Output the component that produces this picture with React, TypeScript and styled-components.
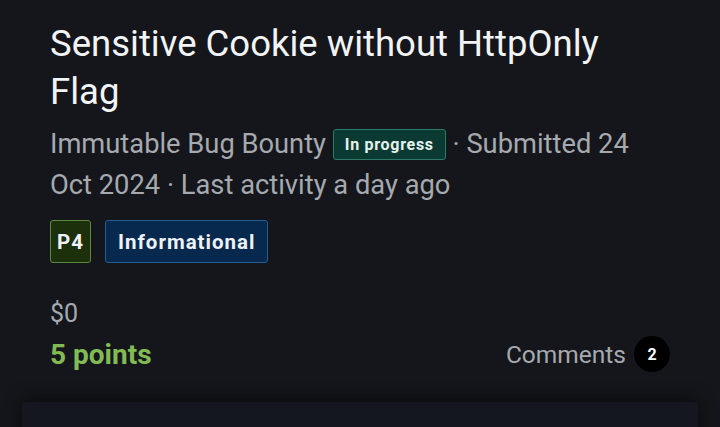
import styled, { createGlobalStyle } from 'styled-components';

const GlobalStyle = createGlobalStyle`
  body {
    margin: 0;
    background: #14161b;
    font-family: Roboto, "Noto Sans", sans-serif;
    overflow: hidden;
  }
`;

const Page = styled.div`
  padding: 20px 22px 0;
  height: 427px;
  box-sizing: border-box;
`;

const Summary = styled.section`
  padding: 0 28px;
`;

const Title = styled.h1`
  margin: 0;
  font-size: 36.5px;
  font-weight: 400;
  line-height: 48px;
  color: #f2f3f5;
`;

const Meta = styled.p`
  margin: 8px 0 0;
  font-size: 27.3px;
  line-height: 41px;
  color: #a6a9ae;
`;

const Status = styled.span`
  display: inline-block;
  vertical-align: 3px;
  padding: 0 11px;
  height: 29px;
  line-height: 29px;
  font-size: 16px;
  font-weight: 700;
  letter-spacing: 0.7px;
  color: #e6f2ee;
  background: #0b3a32;
  border: 1px solid #2b7b66;
  border-radius: 3px;
`;

const Tags = styled.div`
  display: flex;
  gap: 14px;
  margin-top: 14px;
`;

const Tag = styled.span<{ $bg: string; $border: string; $pad: number }>`
  display: inline-flex;
  align-items: center;
  height: 43px;
  padding: 0 ${(p) => p.$pad}px;
  box-sizing: border-box;
  font-size: 20.5px;
  font-weight: 700;
  letter-spacing: 1px;
  color: #eef1f5;
  background: ${(p) => p.$bg};
  border: 1px solid ${(p) => p.$border};
  border-radius: 3px;
`;

const Reward = styled.div`
  margin-top: 35px;
  font-size: 25px;
  line-height: 32px;
  color: #a6a9ae;
`;

const Footer = styled.div`
  display: flex;
  align-items: center;
  justify-content: space-between;
  margin-top: 6px;
`;

const Points = styled.span`
  font-size: 28px;
  font-weight: 700;
  color: #82bb53;
`;

const Comments = styled.span`
  display: flex;
  align-items: center;
  gap: 8px;
  font-size: 24.5px;
  color: #a6a9ae;
`;

const Count = styled.span`
  display: inline-flex;
  align-items: center;
  justify-content: center;
  width: 36px;
  height: 36px;
  border-radius: 50%;
  background: #000;
  color: #fff;
  font-size: 16px;
  font-weight: 700;
`;

const Card = styled.div`
  margin-top: 30px;
  height: 60px;
  background: #141720;
  box-shadow: 0 -2px 16px rgba(0, 0, 0, 0.6);
  border-radius: 4px 4px 0 0;
`;

export default function App() {
  return (
    <>
      <GlobalStyle />
      <Page>
        <Summary>
          <Title>Sensitive Cookie without HttpOnly Flag</Title>
          <Meta>
            Immutable Bug Bounty <Status>In progress</Status> · Submitted 24 Oct 2024 · Last activity a day ago
          </Meta>
          <Tags>
            <Tag $bg="#1b300b" $border="#5b8a3c" $pad={6}>P4</Tag>
            <Tag $bg="#06294d" $border="#245d92" $pad={12}>Informational</Tag>
          </Tags>
          <Reward>$0</Reward>
          <Footer>
            <Points>5 points</Points>
            <Comments>
              Comments <Count>2</Count>
            </Comments>
          </Footer>
        </Summary>
        <Card />
      </Page>
    </>
  );
}
